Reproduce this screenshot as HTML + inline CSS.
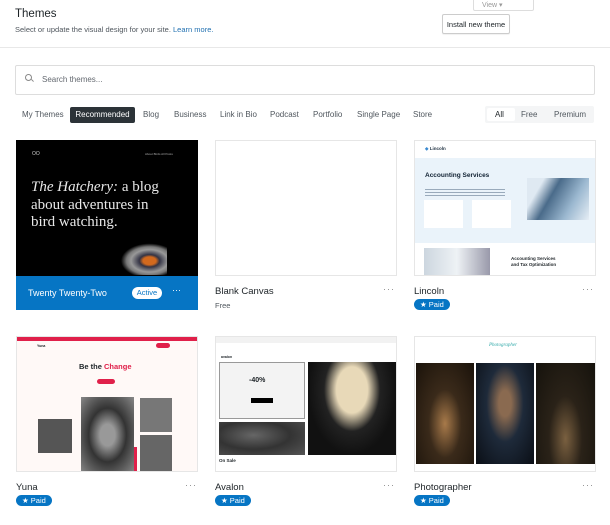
<!DOCTYPE html>
<html><head><style>
*{box-sizing:border-box;margin:0;padding:0}
body{width:610px;height:525px;overflow:hidden;background:#fff;font-family:"Liberation Sans",sans-serif;color:#1d2327;position:relative}
.abs{position:absolute}
.img{position:absolute;width:182px;height:136px;border:1px solid #e6e6e6;overflow:hidden;background:#fff}
.name{position:absolute;font-size:9.5px;color:#1d2327}
.dots{position:absolute;font-size:9px;color:#888;letter-spacing:1px}
.paid{position:absolute;background:#0675c4;color:#fff;font-size:7.5px;border-radius:8px;height:11px;line-height:11px;padding:0 6px}
.tab{position:absolute;top:110px;font-size:8px;color:#50575e}
</style></head><body>
<div class="abs" style="left:473px;top:-4px;width:61px;height:15px;border:1px solid #ddd;border-radius:2px;font-size:7px;color:#999;padding:4px 0 0 8px">View &#9662;</div>
<div class="abs" style="left:15px;top:8px;font-size:11.5px">Themes</div>
<div class="abs" style="left:15px;top:25px;font-size:7.5px;color:#50575e">Select or update the visual design for your site. <span style="color:#2271b1">Learn more.</span></div>
<div class="abs" style="left:442px;top:14px;width:68px;height:20px;border:1px solid #ccc;border-radius:2px;font-size:7.5px;text-align:center;line-height:19px;box-shadow:0 1px 1px rgba(0,0,0,.06)">Install new theme</div>
<div class="abs" style="left:0;top:47px;width:610px;height:1px;background:#e8e8e8"></div>
<div class="abs" style="left:15px;top:65px;width:580px;height:30px;border:1px solid #ddd;border-radius:2px"></div>
<div class="abs" style="left:25px;top:74px;width:7px;height:7px;border:1px solid #888;border-radius:50%"></div>
<div class="abs" style="left:31px;top:80px;width:3px;height:1px;background:#888;transform:rotate(45deg)"></div>
<div class="abs" style="left:42px;top:75px;font-size:8px;color:#646970">Search themes...</div>
<div class="tab" style="left:22px">My Themes</div>
<div class="abs" style="left:70px;top:107px;width:65px;height:16px;background:#2c3338;border-radius:2px;color:#fff;font-size:8px;text-align:center;line-height:16px">Recommended</div>
<div class="tab" style="left:143px">Blog</div>
<div class="tab" style="left:174px">Business</div>
<div class="tab" style="left:220px">Link in Bio</div>
<div class="tab" style="left:270px">Podcast</div>
<div class="tab" style="left:313px">Portfolio</div>
<div class="tab" style="left:357px">Single Page</div>
<div class="tab" style="left:413px">Store</div>
<div class="abs" style="left:485px;top:106px;width:109px;height:17px;background:#f4f5f6;border-radius:2px"></div>
<div class="abs" style="left:487px;top:108px;width:28px;height:13px;background:#fff;border-radius:2px"></div>
<div class="tab" style="left:495px;color:#1d2327">All</div>
<div class="tab" style="left:521px">Free</div>
<div class="tab" style="left:554px">Premium</div>

<!-- row1 -->
<div class="img" style="left:16px;top:140px;background:#000;border-color:#000">
 <div class="abs" style="left:15px;top:10px;color:#ccc;font-size:5px">OO</div>
 <div class="abs" style="left:128px;top:11px;color:#aaa;font-size:3px">About Birds All Posts</div>
 <div class="abs" style="left:14px;top:38px;width:128px;color:#e8e8e8;font-family:'Liberation Serif',serif;font-size:15px;line-height:17.5px"><i>The Hatchery:</i> a blog about adventures in bird watching.</div>
 <div class="abs" style="left:100px;top:100px;width:50px;height:36px;background:radial-gradient(ellipse at 65% 55%,#d2691e 0 14%,#334 22%,#999 40%,#777 50%,transparent 62%)"></div>
</div>
<div class="abs" style="left:16px;top:276px;width:182px;height:34px;background:#0675c4"></div>
<div class="abs" style="left:28px;top:288px;color:#fff;font-size:9px">Twenty Twenty-Two</div>
<div class="abs" style="left:132px;top:287px;width:30px;height:12px;background:#fff;border-radius:6px;font-size:7.5px;color:#0675c4;text-align:center;line-height:12px">Active</div>
<div class="abs" style="left:172px;top:285px;color:#fff;font-size:9px">···</div>

<div class="img" style="left:215px;top:140px"></div>
<div class="name" style="left:215px;top:286px">Blank Canvas</div>
<div class="dots" style="left:383px;top:284px">···</div>
<div class="abs" style="left:215px;top:301px;font-size:7.5px;color:#50575e">Free</div>

<div class="img" style="left:414px;top:140px">
 <div class="abs" style="left:10px;top:5px;font-size:4.5px;color:#234;font-weight:bold"><span style="color:#3a8ad0">&#9670;</span> Lincoln</div>
 <div class="abs" style="left:0;top:17px;width:182px;height:85px;background:#eaf3fa"></div>
 <div class="abs" style="left:10px;top:31px;font-size:6.5px;font-weight:bold;color:#123">Accounting Services</div>
 <div class="abs" style="left:10px;top:47px;width:80px;height:8px;background:repeating-linear-gradient(#eaf3fa 0 1px,#9ab 1px 2px,#eaf3fa 2px 3px)"></div>
 <div class="abs" style="left:9px;top:59px;width:39px;height:28px;background:#fff"></div>
 <div class="abs" style="left:57px;top:59px;width:39px;height:28px;background:#fff"></div>
 <div class="abs" style="left:112px;top:37px;width:62px;height:42px;background:linear-gradient(120deg,#dfe9f2 20%,#4a6b8a 40%,#9bb8d0 70%,#e6eef5)"></div>
 <div class="abs" style="left:9px;top:107px;width:66px;height:30px;background:linear-gradient(90deg,#ccd6df,#eef2f5 50%,#99a)"></div>
 <div class="abs" style="left:96px;top:115px;font-size:4.5px;font-weight:bold;line-height:6px">Accounting Services<br>and Tax Optimization</div>
</div>
<div class="name" style="left:414px;top:286px">Lincoln</div>
<div class="dots" style="left:582px;top:284px">···</div>
<div class="paid" style="left:414px;top:299px">&#9733; Paid</div>

<!-- row2 -->
<div class="img" style="left:16px;top:336px;background:#fff9f7">
 <div class="abs" style="left:0;top:0;width:182px;height:4px;background:#e0204a"></div>
 <div class="abs" style="left:20px;top:7px;font-size:3.5px;font-weight:bold">Yuna</div>
 <div class="abs" style="left:139px;top:6px;width:14px;height:5px;border-radius:3px;background:#e0204a"></div>
 <div class="abs" style="left:62px;top:25px;font-size:7.5px;font-weight:bold">Be the <span style="color:#e0204a">Change</span></div>
 <div class="abs" style="left:80px;top:42px;width:18px;height:5px;border-radius:3px;background:#e0204a"></div>
 <div class="abs" style="left:64px;top:60px;width:53px;height:76px;background:radial-gradient(ellipse at 50% 50%,#999 0 20%,#333 50%,#888)"></div>
 <div class="abs" style="left:117px;top:110px;width:3px;height:26px;background:#e0204a"></div>
 <div class="abs" style="left:21px;top:82px;width:34px;height:34px;background:#555"></div>
 <div class="abs" style="left:123px;top:61px;width:32px;height:34px;background:#777"></div>
 <div class="abs" style="left:123px;top:98px;width:32px;height:38px;background:#666"></div>
</div>
<div class="name" style="left:16px;top:482px">Yuna</div>
<div class="dots" style="left:185px;top:480px">···</div>
<div class="paid" style="left:16px;top:495px">&#9733; Paid</div>

<div class="img" style="left:215px;top:336px">
 <div class="abs" style="left:0;top:0;width:182px;height:6px;background:#f2f2f2"></div>
 <div class="abs" style="left:5px;top:18px;font-size:3.5px;font-weight:bold">avalon</div>
 <div class="abs" style="left:3px;top:25px;width:86px;height:57px;border:1px solid #999;background:#f3f3f3"></div>
 <div class="abs" style="left:33px;top:40px;font-size:7px;font-weight:bold">-40%</div>
 <div class="abs" style="left:35px;top:61px;width:22px;height:5px;background:#000"></div>
 <div class="abs" style="left:92px;top:25px;width:88px;height:93px;background:radial-gradient(ellipse at 50% 30%,#e8d9b8 0 25%,#222 45%,#111 70%),#ccc"></div>
 <div class="abs" style="left:3px;top:85px;width:86px;height:33px;background:radial-gradient(ellipse at 40% 40%,#666,#333 50%,#555)"></div>
 <div class="abs" style="left:3px;top:121px;font-size:4.5px;font-weight:bold">On Sale</div>
</div>
<div class="name" style="left:215px;top:482px">Avalon</div>
<div class="dots" style="left:383px;top:480px">···</div>
<div class="paid" style="left:215px;top:495px">&#9733; Paid</div>

<div class="img" style="left:414px;top:336px">
 <div class="abs" style="left:74px;top:6px;font-size:5px;color:#3aa;font-style:italic;font-family:'Liberation Serif',serif">Photographer</div>
 <div class="abs" style="left:1px;top:26px;width:58px;height:101px;background:radial-gradient(ellipse at 50% 60%,#a87a4a,#3a2a1a 40%,#1a120a)"></div>
 <div class="abs" style="left:61px;top:26px;width:58px;height:101px;background:radial-gradient(ellipse at 50% 40%,#8a6a50 0 15%,#1e2a3a 45%,#0a0e15)"></div>
 <div class="abs" style="left:121px;top:26px;width:59px;height:101px;background:radial-gradient(ellipse at 50% 75%,#7a6040,#2a2218 40%,#15120c)"></div>
</div>
<div class="name" style="left:414px;top:482px">Photographer</div>
<div class="dots" style="left:582px;top:480px">···</div>
<div class="paid" style="left:414px;top:495px">&#9733; Paid</div>
</body></html>
